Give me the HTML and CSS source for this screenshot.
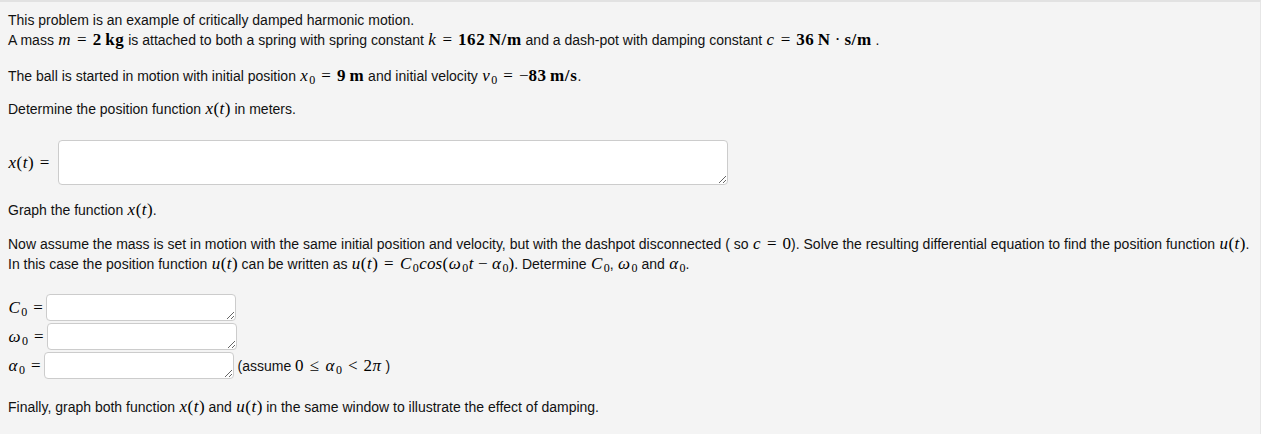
FILE: index.html
```html
<!DOCTYPE html>
<html>
<head>
<meta charset="utf-8">
<link rel="stylesheet" href="styles.css">
</head>
<body>
<div class="page">
  <div class="para first">
    <div class="line">This problem is an example of critically damped harmonic motion.</div>
    <div class="line">A mass <span class="m"><i>m</i><span class="rel">=</span><b>2</b>&#8201;<b>kg</b></span> is attached to both a spring with spring constant <span class="m"><i>k</i><span class="rel">=</span><b>162</b>&#8201;<b>N/m</b></span> and a dash-pot with damping constant <span class="m"><i>c</i><span class="rel">=</span><b>36</b>&#8201;<b>N</b><span class="bin">&#183;</span><b>s/m</b></span> .</div>
  </div>
  <div class="para p2 line">The ball is started in motion with initial position <span class="m"><i>x</i><sub>0</sub><span class="rel">=</span><b>9</b>&#8201;<b>m</b></span> and initial velocity <span class="m"><i>v</i><sub>0</sub><span class="rel">=</span>&#8722;<b>83</b>&#8201;<b>m/s</b></span>.</div>
  <div class="para p3 line">Determine the position function <span class="m"><i>x</i>(<i>t</i>)</span> in meters.</div>
  <div class="answer-row big">
    <span class="m label"><i>x</i>(<i>t</i>)<span class="rel">=</span></span><textarea class="ta ta-big"></textarea>
  </div>
  <div class="para p4 line">Graph the function <span class="m"><i>x</i>(<i>t</i>)</span>.</div>
  <div class="para p5">
    <div class="line">Now assume the mass is set in motion with the same initial position and velocity, but with the dashpot disconnected ( so <span class="m"><i>c</i><span class="rel">=</span>0</span>). Solve the resulting differential equation to find the position function <span class="m"><i>u</i>(<i>t</i>)</span>.</div>
    <div class="line">In this case the position function <span class="m"><i>u</i>(<i>t</i>)</span> can be written as <span class="m"><i>u</i>(<i>t</i>)<span class="rel">=</span><i>C</i><sub>0</sub><i>cos</i>(<i>&#969;</i><sub>0</sub><i>t</i><span class="bin">&#8722;</span><i>&#945;</i><sub>0</sub>)</span>. Determine <span class="m"><i>C</i><sub>0</sub></span>, <span class="m"><i>&#969;</i><sub>0</sub></span> and <span class="m"><i>&#945;</i><sub>0</sub></span>.</div>
  </div>
  <div class="small-rows">
    <div class="answer-row small"><span class="m label"><i>C</i><sub>0</sub><span class="rel">=</span></span><textarea class="ta ta-small"></textarea></div>
    <div class="answer-row small"><span class="m label"><i>&#969;</i><sub>0</sub><span class="rel">=</span></span><textarea class="ta ta-small"></textarea></div>
    <div class="answer-row small"><span class="m label"><i>&#945;</i><sub>0</sub><span class="rel">=</span></span><textarea class="ta ta-small"></textarea><span class="note">(assume <span class="m">0<span class="rel">&#8804;</span><i>&#945;</i><sub>0</sub><span class="rel">&lt;</span>2<i>&#960;</i></span> )</span></div>
  </div>
  <div class="para p6 line">Finally, graph both function <span class="m"><i>x</i>(<i>t</i>)</span> and <span class="m"><i>u</i>(<i>t</i>)</span> in the same window to illustrate the effect of damping.</div>
</div>
</body>
</html>
```

FILE: styles.css
```css
html, body {
  margin: 0;
  padding: 0;
}
body {
  background: #f4f4f4;
  font-family: "Liberation Sans", Arial, sans-serif;
  font-size: 14px;
  color: #111;
  width: 1260px;
  height: 432px;
  border-top: 2px solid #e2e2e2;
  border-right: 1px solid #e6e6e6;
  overflow: hidden;
}
.page {
  padding: 8px 0 0 8px;
}
.line {
  line-height: 20px;
  height: 20px;
  white-space: nowrap;
}
.m {
  font-family: "Liberation Serif", "DejaVu Serif", serif;
  font-size: 17px;
  line-height: 1;
  color: #000;
}
.m i {
  font-style: italic;
  padding: 0 0.5px;
}
.m b {
  font-weight: bold;
  letter-spacing: 0.6px;
}
.m sub {
  font-size: 12px;
  vertical-align: -3px;
  line-height: 0;
  margin-left: 1px;
}
.rel {
  margin: 0 6px;
}
.bin {
  margin: 0 4px;
}
.p2 { margin-top: 16px; }
.p3 { margin-top: 13px; }
.answer-row {
  display: flex;
  align-items: center;
}
.answer-row.big {
  margin-top: 21px;
}
.label {
  white-space: nowrap;
}
.big .label { margin-right: 3px; }
.small .label .rel { margin-right: 3px; }
.ta {
  box-sizing: border-box;
  background: #fff;
  border: 1px solid #cccccc;
  border-radius: 4px;
  margin: 0;
  padding: 4px 6px;
  font-family: "Liberation Sans", Arial, sans-serif;
  font-size: 13px;
}
.ta-big {
  width: 670px;
  height: 45px;
}
.p4 { margin-top: 15px; }
.p5 { margin-top: 14px; }
.small-rows {
  margin-top: 20px;
  display: flex;
  flex-direction: column;
  gap: 2px;
}
.ta-small {
  width: 190px;
  height: 27px;
}
.note {
  margin-left: 4px;
}
.note .m .rel { margin: 0 6px; }
.p6 { margin-top: 18px; }
```
